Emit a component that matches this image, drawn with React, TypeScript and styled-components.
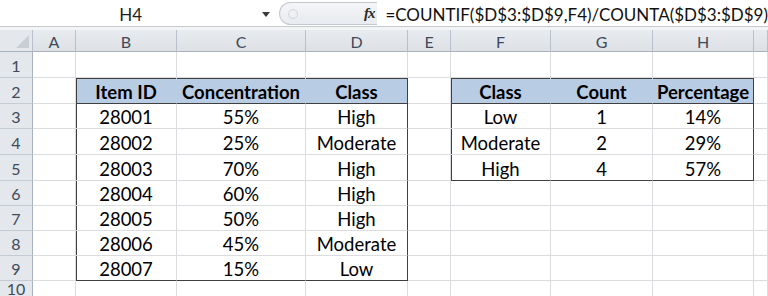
import React from "react";
import styled, { createGlobalStyle } from "styled-components";

const GlobalStyle = createGlobalStyle`
  html, body {
    margin: 0;
    padding: 0;
    background: #ffffff;
    overflow: hidden;
  }
  body {
    font-family: Lato, "Open Sans", "Liberation Sans", sans-serif;
  }
`;

// the last column is only a sliver at the right edge, so no letter shows
const COLUMNS = ["A", "B", "C", "D", "E", "F", "G", "H", ""];
const COL_WIDTHS = [43, 101, 129, 102, 43, 100, 102, 101, 14];
const ROW_HEIGHTS = [26, 26, 25, 26, 26, 25, 25, 25, 25, 20];

const GRID_LINE = "#dadcdf";
const TABLE_LINE = "#404040";
const HEADER_FILL = "#b8cce4";

type Range = { top: number; left: number; bottom: number; right: number };

// two bordered blocks: the item list and the class summary
const tables: Range[] = [
  { top: 2, left: 1, bottom: 9, right: 3 },
  { top: 2, left: 5, bottom: 5, right: 7 }
];

const cells: Record<string, string> = {};
const put = (row: number, col: number, values: string[]) => {
  values.forEach((v, i) => {
    cells[`${row}:${col + i}`] = v;
  });
};

put(2, 1, ["Item ID", "Concentration", "Class"]);
[
  ["28001", "55%", "High"],
  ["28002", "25%", "Moderate"],
  ["28003", "70%", "High"],
  ["28004", "60%", "High"],
  ["28005", "50%", "High"],
  ["28006", "45%", "Moderate"],
  ["28007", "15%", "Low"]
].forEach((r, i) => put(3 + i, 1, r));

put(2, 5, ["Class", "Count", "Percentage"]);
[
  ["Low", "1", "14%"],
  ["Moderate", "2", "29%"],
  ["High", "4", "57%"]
].forEach((r, i) => put(3 + i, 5, r));

const Sheet = styled.div`
  width: 768px;
  height: 296px;
  overflow: hidden;
  display: flex;
  flex-direction: column;
  background: #ffffff;
`;

const FormulaBar = styled.div`
  display: flex;
  height: 27px;
  box-sizing: border-box;
  border-bottom: 1px solid #c5cad1;
  background: #ffffff;
  flex-shrink: 0;
`;

const NameBox = styled.div`
  position: relative;
  width: 285px;
  display: flex;
  align-items: center;
  justify-content: center;
  font-size: 17px;
  color: #1f1f1f;
  padding: 2px 18px 0 0;
  box-sizing: border-box;
`;

const DropArrow = styled.span`
  position: absolute;
  right: 9px;
  top: 12px;
  width: 0;
  height: 0;
  border-left: 4px solid transparent;
  border-right: 4px solid transparent;
  border-top: 5px solid #3a3a3a;
`;

const FxPill = styled.div`
  width: 100px;
  margin-top: 2px;
  height: 23px;
  box-sizing: border-box;
  border: 1px solid #c3c8cf;
  border-right: none;
  border-radius: 12px 0 0 12px;
  background: linear-gradient(#f4f5f7, #e8ebef);
  display: flex;
  align-items: center;
  justify-content: space-between;
  padding: 0 3px 0 8px;
`;

const PillKnob = styled.span`
  width: 8px;
  height: 8px;
  border-radius: 50%;
  border: 1px solid #d2d6dc;
  background: #eef0f3;
`;

const FxMark = styled.span`
  font-family: "Liberation Serif", "DejaVu Serif", serif;
  font-style: italic;
  font-weight: bold;
  font-size: 15px;
  color: #2b2b2b;
  letter-spacing: -1px;
`;

const FormulaText = styled.div`
  flex: 1;
  display: flex;
  align-items: center;
  padding: 2px 0 0 8px;
  font-size: 17px;
  color: #111111;
  white-space: nowrap;
`;

const Gap = styled.div`
  height: 3px;
  background: #f3f4f6;
  flex-shrink: 0;
`;

const Grid = styled.div`
  display: grid;
  grid-template-columns: 33px ${COL_WIDTHS.map((w) => `${w}px`).join(" ")};
  grid-template-rows: 22px ${ROW_HEIGHTS.map((h) => `${h}px`).join(" ")};
`;

const Corner = styled.div`
  position: relative;
  background: #e4e7eb;
  border-right: 1px solid #b9c0c9;
  border-bottom: 1px solid #a9b3bf;
  box-sizing: border-box;

  &::after {
    content: "";
    position: absolute;
    right: 3px;
    bottom: 3px;
    width: 0;
    height: 0;
    border-left: 13px solid transparent;
    border-bottom: 13px solid #c9ced5;
  }
`;

const ColHead = styled.div`
  display: flex;
  align-items: center;
  justify-content: center;
  background: linear-gradient(#e8ebef, #dde1e6);
  border-right: 1px solid #b9c0c9;
  border-bottom: 1px solid #a9b3bf;
  box-sizing: border-box;
  font-size: 16px;
  color: #3e4a5a;
  padding-top: 1px;
`;

const RowHead = styled.div`
  display: flex;
  align-items: flex-end;
  justify-content: center;
  background: #e4e7eb;
  border-right: 1px solid #a9b3bf;
  border-bottom: 1px solid #c5cbd3;
  box-sizing: border-box;
  font-size: 16px;
  color: #3e4a5a;
  padding-bottom: 3px;
  line-height: 1;
`;

type Edges = { t: boolean; b: boolean; l: boolean; r: boolean };

const Cell = styled.div<{ $fill: boolean; $edges: Edges; $bold: boolean }>`
  display: flex;
  align-items: flex-end;
  justify-content: center;
  box-sizing: border-box;
  background: ${({ $fill }) => ($fill ? HEADER_FILL : "#ffffff")};
  border-right: 1px solid
    ${({ $edges, $fill }) =>
      $edges.r ? TABLE_LINE : $fill ? HEADER_FILL : GRID_LINE};
  border-bottom: 1px solid ${({ $edges }) => ($edges.b ? TABLE_LINE : GRID_LINE)};
  box-shadow: ${({ $edges }) => {
    const parts: string[] = [];
    if ($edges.t) parts.push(`inset 0 1px 0 ${TABLE_LINE}`);
    if ($edges.l) parts.push(`inset 1px 0 0 ${TABLE_LINE}`);
    return parts.length ? parts.join(", ") : "none";
  }};
  font-size: 18.5px;
  font-weight: ${({ $bold }) => ($bold ? 700 : 400)};
  color: #000000;
  white-space: nowrap;
  line-height: 1;
  padding-bottom: 2px;
`;

const edgesFor = (row: number, col: number) => {
  const e: Edges = { t: false, b: false, l: false, r: false };
  let header = false;
  for (const t of tables) {
    if (row >= t.top && row <= t.bottom && col >= t.left && col <= t.right) {
      header = row === t.top;
      e.t = row === t.top;
      e.b = row === t.bottom || row === t.top;
      e.l = col === t.left;
      e.r = col === t.right;
    }
  }
  return { e, header };
};

export default function App() {
  return (
    <>
      <GlobalStyle />
      <Sheet>
        <FormulaBar>
          <NameBox>
            H4
            <DropArrow />
          </NameBox>
          <FxPill>
            <PillKnob />
            <FxMark>fx</FxMark>
          </FxPill>
          <FormulaText>=COUNTIF($D$3:$D$9,F4)/COUNTA($D$3:$D$9)</FormulaText>
        </FormulaBar>
        <Gap />
        <Grid>
          <Corner />
          {COLUMNS.map((c, i) => (
            <ColHead key={i}>{c}</ColHead>
          ))}
          {ROW_HEIGHTS.map((_, ri) => {
            const row = ri + 1;
            return (
              <React.Fragment key={row}>
                <RowHead>{row}</RowHead>
                {COLUMNS.map((_, ci) => {
                  const { e, header } = edgesFor(row, ci);
                  return (
                    <Cell key={ci} $fill={header} $edges={e} $bold={header}>
                      {cells[`${row}:${ci}`] ?? ""}
                    </Cell>
                  );
                })}
              </React.Fragment>
            );
          })}
        </Grid>
      </Sheet>
    </>
  );
}
